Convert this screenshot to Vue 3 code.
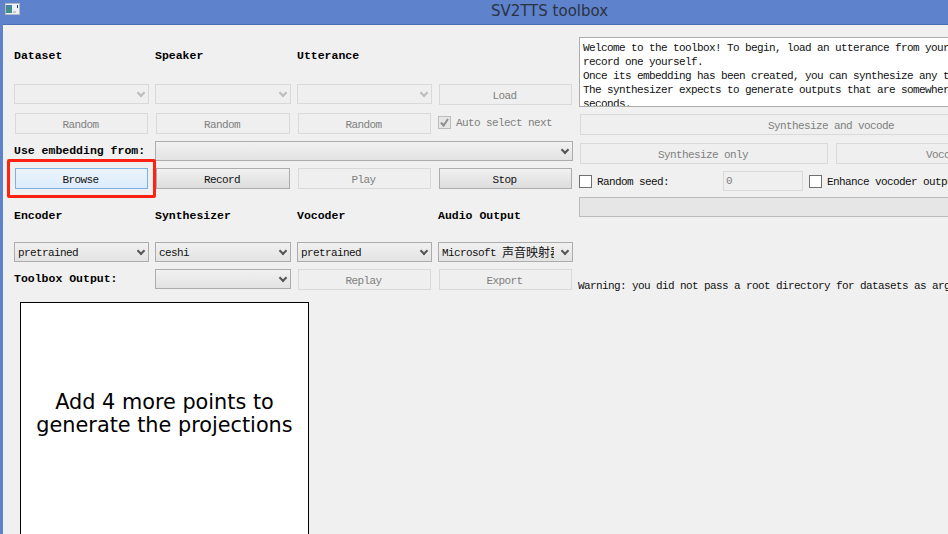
<script setup>
const topLabels = ['Dataset', 'Speaker', 'Utterance']
const modelLabels = ['Encoder', 'Synthesizer', 'Vocoder', 'Audio Output']
const models = [
  { id: 1, latin: 'pretrained', cjk: '' },
  { id: 2, latin: 'ceshi', cjk: '' },
  { id: 3, latin: 'pretrained', cjk: '' },
  { id: 4, latin: 'Microsoft ', cjk: '声音映射器 - Output' }
]
const logLines = [
  'Welcome to the toolbox! To begin, load an utterance from your datasets or',
  'record one yourself.',
  'Once its embedding has been created, you can synthesize any text written here.',
  'The synthesizer expects to generate outputs that are somewhere between 5 and 12',
  'seconds.'
]
</script>

<template>
  <div class="screen">
    <div class="window">
      <header class="titlebar">
        <svg class="app-icon" width="15" height="12" viewBox="0 0 15 12">
          <rect x="0" y="0" width="15" height="12" fill="#b4bac2" />
          <rect x="1" y="1" width="13" height="10" fill="#eef1f4" />
          <rect x="1" y="2" width="6" height="8" fill="#3f8f88" />
          <rect x="1" y="2" width="6" height="2" fill="#4a7fb5" />
          <rect x="8" y="8" width="3" height="2" fill="#c4c8cc" />
          <rect x="12" y="2" width="1" height="3" fill="#1c3f8a" />
        </svg>
        <span class="title">SV2TTS toolbox</span>
      </header>

      <div class="body">
        <section class="left">
          <div class="row row-top">
            <b v-for="l in topLabels" :key="l" class="label">{{ l }}</b>
          </div>

          <div class="row row-a">
            <div v-for="n in 3" :key="n" class="combo off"><i class="chev"></i></div>
            <button class="btn" disabled>Load</button>
          </div>

          <div class="row row-b">
            <button v-for="n in 3" :key="n" class="btn" disabled>Random</button>
            <label class="check off auto"><span class="box ticked">
              <svg width="11" height="11" viewBox="0 0 11 11"><path d="M2 5.5 4.5 8.5 9 2" fill="none" stroke="#8f8f8f" stroke-width="2" /></svg>
            </span><span class="txt">Auto select next</span></label>
          </div>

          <div class="row row-c">
            <b class="label">Use embedding from:</b>
            <div class="combo wide"><i class="chev"></i></div>
          </div>

          <div class="row row-d">
            <div class="highlight"><button class="btn on hot">Browse</button></div>
            <button class="btn on">Record</button>
            <button class="btn" disabled>Play</button>
            <button class="btn on">Stop</button>
          </div>

          <div class="row row-e">
            <b v-for="l in modelLabels" :key="l" class="label">{{ l }}</b>
          </div>

          <div class="row row-f">
            <div v-for="m in models" :key="m.id" class="combo">
              <span class="val">{{ m.latin }}<span v-if="m.cjk" class="cjk">{{ m.cjk }}</span></span>
              <i class="chev"></i>
            </div>
          </div>

          <div class="row row-g">
            <b class="label">Toolbox Output:</b>
            <div class="combo"><i class="chev"></i></div>
            <button class="btn" disabled>Replay</button>
            <button class="btn" disabled>Export</button>
          </div>

          <div class="plot">
            <p>Add 4 more points to<br />generate the projections</p>
          </div>
        </section>

        <section class="right">
          <div class="log">
            <div v-for="(line, i) in logLines" :key="i">{{ line }}</div>
          </div>
          <button class="btn full" disabled>Synthesize and vocode</button>
          <div class="pair">
            <button class="btn" disabled>Synthesize only</button>
            <button class="btn" disabled>Vocode only</button>
          </div>
          <div class="options">
            <label class="check seed"><span class="box"></span><span class="txt">Random seed:</span></label>
            <div class="seed-input">0</div>
            <label class="check enhance"><span class="box"></span><span class="txt">Enhance vocoder output</span></label>
          </div>
          <div class="progress"></div>
          <div class="warning">Warning: you did not pass a root directory for datasets as argument.</div>
        </section>
      </div>
    </div>
  </div>
</template>

<style>
html, body { margin: 0; background: #f0f0f0; }
</style>

<style scoped>
.screen { width: 948px; height: 534px; overflow: hidden; }
.window { width: 1100px; height: 534px; display: flex; flex-direction: column; background: #5e82cc; }
.titlebar { height: 24px; flex: none; position: relative; display: flex; align-items: center; justify-content: center; }
.app-icon { position: absolute; left: 5px; top: 3px; }
.title { font: 15px "DejaVu Sans", sans-serif; color: #2a3340; margin-top: -3px; margin-left: -1px; }
.body {
  flex: 1; min-height: 0; margin-left: 3px; border-top: 1px solid #4a6fb5; background: #f0f0f0;
  display: flex; overflow: hidden;
  font: 11px "Liberation Mono", monospace; letter-spacing: -0.6px; color: #111;
}
.left { width: 576px; flex: none; padding-left: 11px; box-sizing: border-box; }
.row { display: grid; grid-template-columns: 135px 136px 135px 135px; column-gap: 6px; }
.row > * { min-width: 0; }
.label { font: bold 11.5px "Liberation Mono", monospace; letter-spacing: 0; white-space: nowrap; line-height: 20px; color: #000; }
.row-top { margin-top: 20px; height: 20px; }
.row-top .label, .row-e .label { line-height: 22px; }
.row-a { margin-top: 19px; height: 20px; }
.row-b { margin-top: 9px; height: 21px; }
.row-c { margin-top: 7px; height: 20px; }
.row-c .wide { grid-column: 2 / 5; }
.row-d { margin-top: 7px; height: 21px; }
.row-e { margin-top: 16px; height: 20px; }
.row-f { margin-top: 17px; height: 20px; }
.row-g { margin-top: 7px; height: 21px; }
.row-g .label { line-height: 19px; }

.combo {
  height: 20px; box-sizing: border-box; border: 1px solid #acacac; position: relative;
  background: linear-gradient(#f1f1f1, #e3e3e3); display: flex; align-items: center; padding-left: 3px; overflow: hidden;
}
.combo.off { background: #efefef; border-color: #d9d9d9; }
.val { white-space: nowrap; width: 112px; overflow: hidden; height: 18px; line-height: 20px; }
.cjk { font: 12px/14px "Noto Sans CJK SC", sans-serif; letter-spacing: 0; vertical-align: -1px; }
.chev { position: absolute; right: 4px; top: 5px; width: 8px; height: 8px; }
.chev::before {
  content: ""; position: absolute; left: 1.5px; top: 0; width: 4px; height: 4px;
  border-right: 2px solid #555; border-bottom: 2px solid #555; transform: rotate(45deg);
}
.combo.off .chev::before { border-color: #bcbcbc; }

.btn {
  font: inherit; letter-spacing: inherit; color: #111; height: 21px; width: 100%; padding: 3px 2px 0 0; margin: 0;
  border: 1px solid #acacac; background: linear-gradient(#f1f1f1, #dddddd); box-sizing: border-box;
}
.row > .btn { width: 133px; margin-left: 1px; }
.row > .btn:nth-child(2) { width: 134px; }
.btn:disabled { background: #efefef; border-color: #d9d9d9; color: #808080; }
.hot { background: linear-gradient(#ecf4fc, #dcecfc); border-color: #7eb4e4; }
.highlight {
  position: relative; margin: 0 0 0 1px; width: 133px; height: 21px;
}
.highlight::after {
  content: ""; position: absolute; left: -8px; top: -9px; width: 149px; height: 39px; box-sizing: border-box;
  border: 3px solid #ff2212; border-radius: 2px; pointer-events: none;
}

.check { display: flex; align-items: center; white-space: nowrap; }
.check.off { color: #808080; }
.txt { padding-top: 1px; }
.box {
  width: 13px; height: 13px; box-sizing: border-box; border: 1px solid #707070; background: #fff;
  margin-right: 5px; flex: none; display: flex; align-items: center; justify-content: center;
}
.box.ticked { background: #e6e6e6; border-color: #bcbcbc; }
.auto { height: 21px; align-self: start; margin-top: -1px; }

.plot {
  margin: 12px 0 0 6px; width: 289px; height: 240px; box-sizing: border-box; border: 1px solid #000; background: #fff;
  border-bottom: none; display: flex; justify-content: center;
}
.plot p {
  margin: 88px 0 0; font: 20.8px/23px "DejaVu Sans", sans-serif; letter-spacing: 0; text-align: center; color: #000; white-space: nowrap;
}

.right { width: 521px; flex: none; padding-left: 0; box-sizing: border-box; }
.log {
  margin-top: 12px; height: 70px; box-sizing: border-box; border: 1px solid #acacac; background: #fff;
  padding: 3px 3px; line-height: 14px; overflow: hidden; white-space: nowrap;
}
.right .full { display: block; margin: 7px 0 0 1px; width: 504px; }
.pair { display: grid; grid-template-columns: 248px 248px; column-gap: 8px; margin: 8px 0 0 1px; }
.options { display: flex; align-items: center; height: 20px; margin-top: 7px; }
.seed { width: 144px; }
.seed-input {
  width: 80px; height: 20px; box-sizing: border-box; border: 1px solid #d9d9d9; background: #efefef;
  color: #808080; padding: 1px 0 0 2px; line-height: 17px;
}
.enhance { margin-left: 6px; }
.progress { margin-top: 6px; height: 20px; box-sizing: border-box; border: 1px solid #bcbcbc; background: #e6e6e6; }
.warning { margin-top: 61px; margin-left: -1px; white-space: nowrap; line-height: 16px; }
</style>
